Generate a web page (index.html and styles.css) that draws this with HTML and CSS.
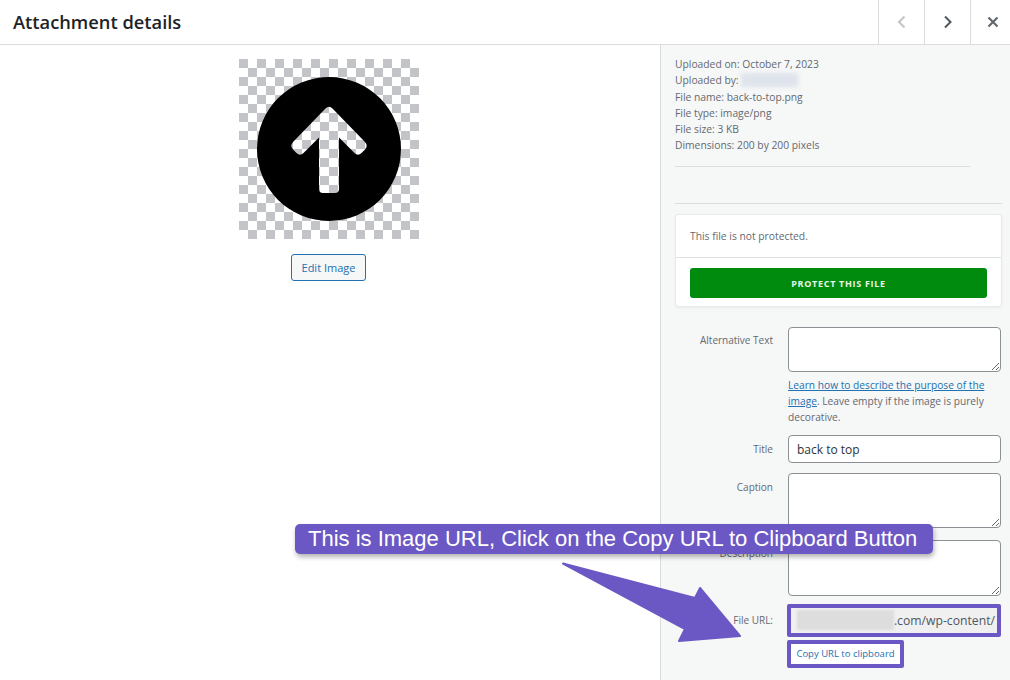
FILE: index.html
```html
<!DOCTYPE html>
<html lang="en">
  <head>
    <meta charset="UTF-8" />
    <title>Attachment details</title>
    <link rel="stylesheet" href="styles.css">
  </head>

  <body>
    <div class="modal">
      <div class="modal-header">
        <h1>Attachment details</h1>
        <div class="nav-buttons">
          <button class="nav-btn">
            <svg width="16" height="16" viewBox="0 0 16 16"><path d="M10.5 2.5 5 8l5.500 5.500" fill="none" stroke="#c3c4c7" stroke-width="2"/></svg>
          </button>
          <button class="nav-btn">
            <svg width="16" height="16" viewBox="0 0 16 16"><path d="M5 2.500 10.500 8 5 13.500" fill="none" stroke="#50575e" stroke-width="2"/></svg>
          </button>
          <button class="nav-btn">
            <svg width="16" height="16" viewBox="0 0 16 16"><path d="M3.500 3.500l9 9M12.500 3.500l-9 9" fill="none" stroke="#646970" stroke-width="2.200"/></svg>
          </button>
        </div>
      </div>

      <div class="modal-body">
        <div class="preview">
          <div class="checker">
            <svg width="180" height="180" viewBox="0 0 180 180">
              <path fill="#000" fill-rule="evenodd" d="M90 18a72 72 0 1 0 0 144a72 72 0 1 0 0-144z
                M86.500 49.500Q90 46 93.500 49.500L125.500 82.500Q129.500 86.700 126 90.500L122.500 94Q119 97.500 115.500 94L100 78.500V130Q100 134 96 134H84Q80 134 80 130V78.500L64.500 94Q61 97.500 57.500 94L54 90.500Q50.500 86.700 54.500 82.500z"/>
            </svg>
          </div>
          <button class="edit-btn">Edit Image</button>
        </div>

        <div class="sidebar">
          <div class="details">
            <div><strong>Uploaded on:</strong> October 7, 2023</div>
            <div><strong>Uploaded by:</strong> <span class="blur-name"></span></div>
            <div><strong>File name:</strong> back-to-top.png</div>
            <div><strong>File type:</strong> image/png</div>
            <div><strong>File size:</strong> 3 KB</div>
            <div><strong>Dimensions:</strong> 200 by 200 pixels</div>
          </div>
          <hr class="rule-short">
          <hr class="rule-long">

          <div class="protect-card">
            <div class="protect-status">This file is not protected.</div>
            <div class="protect-action">
              <button class="protect-btn">PROTECT THIS FILE</button>
            </div>
          </div>

          <div class="field field-alt">
            <label>Alternative Text</label>
            <div>
              <textarea class="area-alt"></textarea>
              <p class="help"><a href="#">Learn how to describe the purpose of the image</a>. Leave empty if the image is purely decorative.</p>
            </div>
          </div>
          <div class="field field-title">
            <label>Title</label>
            <input class="text-input" type="text" value="back to top" />
          </div>
          <div class="field field-caption">
            <label>Caption</label>
            <textarea class="area-caption"></textarea>
          </div>
          <div class="field field-description">
            <label>Description</label>
            <textarea class="area-description"></textarea>
          </div>
          <div class="field field-url">
            <label>File URL:</label>
            <div>
              <div class="url-box"><span class="blur-url"></span>.com/wp-content/</div>
              <button class="copy-btn">Copy URL to clipboard</button>
            </div>
          </div>
        </div>
      </div>

      <div class="callout">This is Image URL, Click on the Copy URL to Clipboard Button</div>
      <svg class="callout-arrow" width="190" height="90" viewBox="0 0 190 90">
        <path fill="#6c58c4" stroke="#6c58c4" stroke-width="2" stroke-linejoin="round" d="M2 3.500 134 38 139 28 179 76 118 81 124 69z"/>
      </svg>
    </div>
  </body>
</html>
```

FILE: styles.css
```css
body {
  margin: 0;
  background: #fff;
  font-family: "Open Sans", "Noto Sans", sans-serif;
  color: #646970;
}

.modal {
  position: relative;
  width: 1010px;
  height: 680px;
  overflow: hidden;
  display: flex;
  flex-direction: column;
}

.modal-header {
  height: 44px;
  flex: none;
  display: flex;
  justify-content: space-between;
  border-bottom: 1px solid #dcdcde;
}

.modal-header h1 {
  margin: 0;
  padding-left: 13px;
  font-size: 18.3px;
  line-height: 44px;
  font-weight: 600;
  color: #1d2327;
}

.nav-buttons {
  display: flex;
}

.nav-btn {
  width: 46px;
  height: 44px;
  padding: 0;
  border: none;
  border-left: 1px solid #dcdcde;
  background: #fff;
  display: flex;
  align-items: center;
  justify-content: center;
}

.nav-btn:last-child {
  width: 40px;
  padding-left: 5px;
}

.modal-body {
  flex: 1;
  display: flex;
  min-height: 0;
}

.preview {
  width: 660px;
  flex: none;
  display: flex;
  flex-direction: column;
  align-items: center;
  padding: 14px 2px 0 0;
  box-sizing: border-box;
}

.checker {
  width: 180px;
  height: 180px;
  background-color: #fff;
  background-image: conic-gradient(#fff 25%, #c3c4c7 25% 50%, #fff 50% 75%, #c3c4c7 75%);
  background-size: 18px 18px;
}

.checker svg {
  display: block;
}

.edit-btn {
  margin: 15px 1px 0 0;
  width: 75px;
  height: 27px;
  padding: 0;
  border: 1px solid #2271b1;
  border-radius: 3px;
  background: #f6f7f7;
  color: #2271b1;
  font-family: inherit;
  font-size: 11px;
}

.sidebar {
  flex: 1;
  min-width: 0;
  box-sizing: border-box;
  padding: 11px 8px 0 14px;
  border-left: 1px solid #dcdcde;
  background: #f6f7f7;
  overflow: hidden;
}

.details {
  font-size: 10.3px;
  line-height: 16.25px;
}

.details strong {
  font-weight: 500;
}

.blur-name {
  display: inline-block;
  width: 57px;
  height: 14px;
  vertical-align: -3px;
  background: #dfe4ec;
  filter: blur(2px);
}

.rule-short,
.rule-long {
  margin: 0;
  border: none;
  border-top: 1px solid #dcdcde;
}

.rule-short {
  width: 295px;
  margin-top: 12px;
}

.rule-long {
  margin-top: 36px;
}

.protect-card {
  margin-top: 10px;
  background: #fff;
  border: 1px solid #e6e9ed;
  border-radius: 3px;
  box-shadow: 0 1px 3px rgba(0, 0, 0, 0.05);
}

.protect-status {
  height: 42px;
  padding-left: 14px;
  font-size: 10.3px;
  line-height: 43px;
  border-bottom: 1px solid #dfe3e8;
}

.protect-action {
  padding: 10px 14px 8px;
}

.protect-btn {
  display: block;
  width: 100%;
  height: 30px;
  padding: 2px 0 0;
  border: none;
  border-radius: 3px;
  background: #008a0e;
  color: #e8f5e4;
  font-family: inherit;
  font-size: 9px;
  font-weight: 700;
  letter-spacing: 0.7px;
}

.field {
  display: grid;
  grid-template-columns: 98px 213px;
  column-gap: 15px;
  margin-top: 10px;
}

.field label {
  text-align: right;
  font-size: 10px;
  line-height: 16px;
  padding-top: 5px;
}

.field-alt {
  margin-top: 20px;
}

.field-title label,
.field-caption label {
  padding-top: 6px;
}

.field-description {
  margin-top: 12px;
}

.field-url {
  margin-top: 8px;
}

.field-url label {
  padding-top: 8px;
}

textarea,
.text-input {
  display: block;
  box-sizing: border-box;
  width: 213px;
  margin: 0;
  border: 1px solid #8c8f94;
  border-radius: 4px;
  background: #fff;
  color: #2c3338;
  font-family: inherit;
}

.area-alt {
  height: 45px;
}

.area-caption {
  height: 55px;
}

.area-description {
  height: 56px;
}

.text-input {
  height: 28px;
  padding: 1px 8px 0;
  font-size: 12px;
}

.help {
  margin: 5px 0 0;
  font-size: 10.2px;
  line-height: 16px;
}

.help a {
  color: #2271b1;
}

.url-box {
  box-sizing: border-box;
  width: 214px;
  height: 33px;
  margin-left: -1px;
  padding-right: 2px;
  border: 4px solid #6c58c4;
  border-radius: 2px;
  background: #f0f0f1;
  display: flex;
  align-items: center;
  justify-content: flex-end;
  font-size: 12.2px;
  color: #50575e;
  overflow: hidden;
}

.blur-url {
  width: 97px;
  height: 20px;
  flex: none;
  background: #dddddd;
  filter: blur(1px);
}

.copy-btn {
  display: block;
  box-sizing: border-box;
  width: 117px;
  height: 28px;
  margin: 3px 0 0 -1px;
  padding: 0;
  border: 4px solid #6c58c4;
  border-radius: 2px;
  background: #fff;
  color: #2271b1;
  font-family: inherit;
  font-size: 9.500px;
}

/* annotation drawn over the screenshot */
.callout {
  position: absolute;
  left: 295px;
  top: 524px;
  width: 638px;
  height: 30px;
  box-sizing: border-box;
  padding-left: 13px;
  border-radius: 5px;
  background: #6c58c4;
  box-shadow: 1px 3px 5px rgba(0, 0, 0, 0.3);
  color: #fff;
  font-family: "Liberation Sans", Arial, sans-serif;
  font-size: 22px;
  line-height: 29px;
  white-space: nowrap;
}

.callout-arrow {
  position: absolute;
  left: 561px;
  top: 560px;
}
```
